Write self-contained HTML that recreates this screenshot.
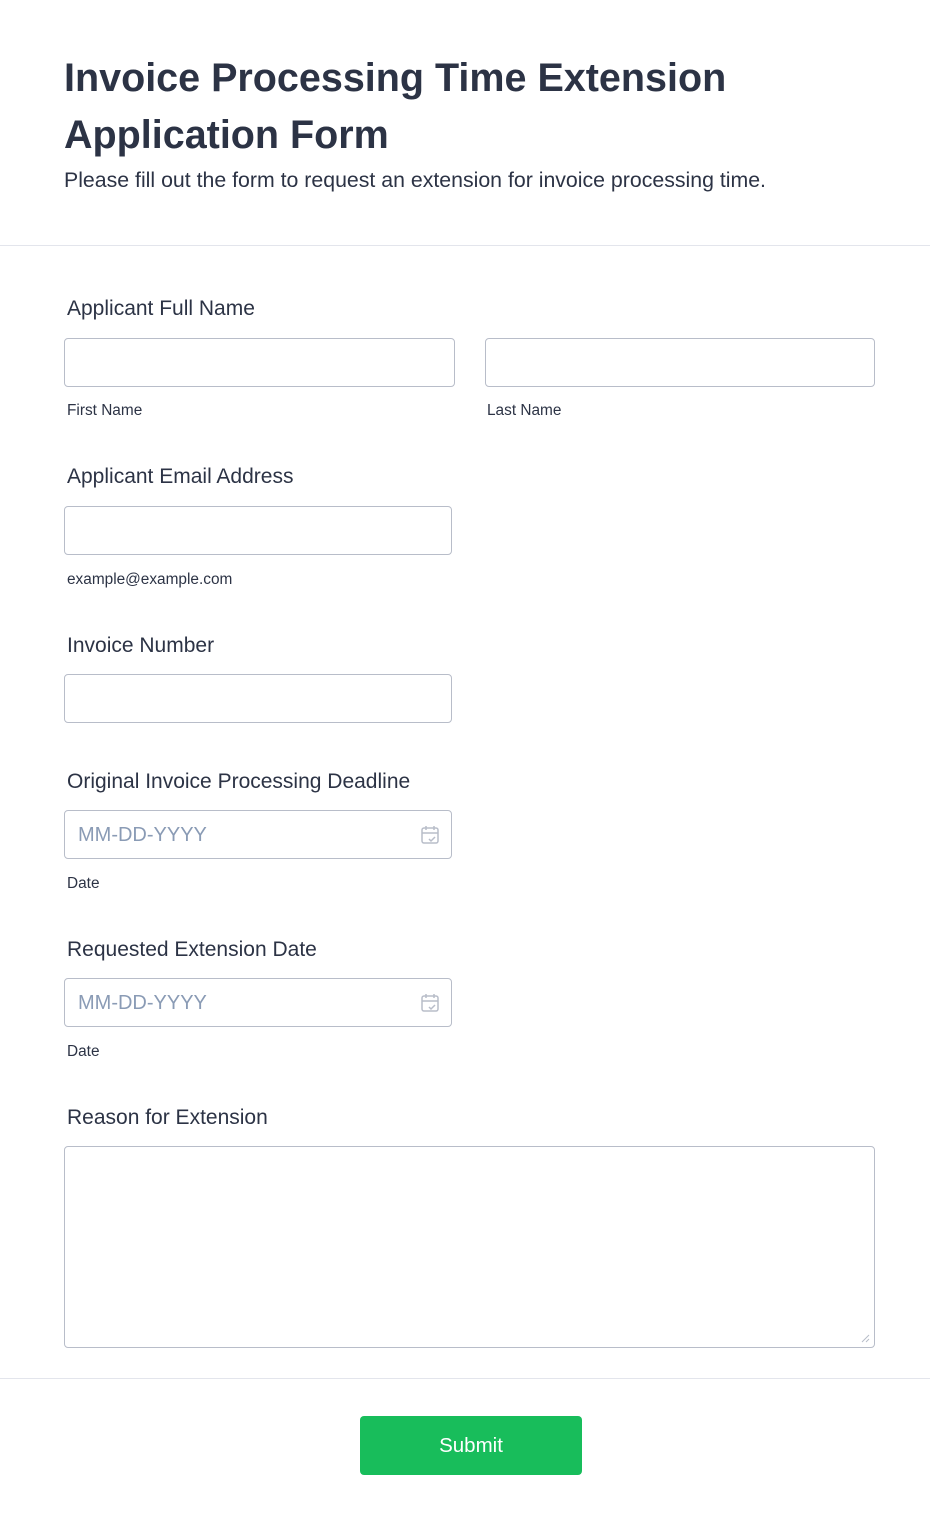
<!DOCTYPE html>
<html><head><meta charset="utf-8"><style>
*{margin:0;padding:0;box-sizing:border-box}
body{width:930px;height:1525px;background:#fff;font-family:"Liberation Sans",Arial,sans-serif;color:#2c3345;position:relative;overflow:hidden}
.a{position:absolute;white-space:nowrap}
h1{position:absolute;left:64px;top:50px;font-size:39.5px;line-height:57px;font-weight:bold;color:#2c3345;letter-spacing:0}
.sub{left:64px;top:168px;font-size:21.3px}
.hr{position:absolute;left:0;width:930px;height:1px;background:#e3e5ec}
.lbl{font-size:21px;left:67px;line-height:24px}
.sl{font-size:15.4px;line-height:18px;color:#2c3345}
.in{position:absolute;border:1px solid #b8bdc9;border-radius:4px;background:#fff}
.ph{position:absolute;left:13px;top:13px;font-size:20px;color:#8a9bb5}
.cal{position:absolute;right:12px;top:14px}
.btn{position:absolute;left:360px;top:1416px;width:222px;height:59px;background:#18bd5b;border-radius:4px;color:#fff;font-size:20.5px;text-align:center;line-height:60px}
</style></head><body>
<h1>Invoice Processing Time Extension<br>Application Form</h1>
<div class="a sub">Please fill out the form to request an extension for invoice processing time.</div>
<div class="hr" style="top:245px"></div>

<div class="a lbl" style="top:297px">Applicant Full Name</div>
<div class="in" style="left:64px;top:338px;width:391px;height:49px"></div>
<div class="in" style="left:485px;top:338px;width:390px;height:49px"></div>
<div class="a sl" style="left:67px;top:402px">First Name</div>
<div class="a sl" style="left:487px;top:402px">Last Name</div>

<div class="a lbl" style="top:465px">Applicant Email Address</div>
<div class="in" style="left:64px;top:506px;width:388px;height:49px"></div>
<div class="a sl" style="left:67px;top:571px">example@example.com</div>

<div class="a lbl" style="top:634px">Invoice Number</div>
<div class="in" style="left:64px;top:674px;width:388px;height:49px"></div>

<div class="a lbl" style="top:770px">Original Invoice Processing Deadline</div>
<div class="in" style="left:64px;top:810px;width:388px;height:49px"><div class="ph">MM-DD-YYYY</div>
<svg class="cal" width="18" height="20" viewBox="0 0 18 20" fill="none" stroke="#b8bdc9" stroke-width="1.5"><rect x="1" y="3" width="16" height="15" rx="2"/><path d="M5 1v4M13 1v4M1 8h16M8 14l2 2 4-4"/></svg></div>
<div class="a sl" style="left:67px;top:875px">Date</div>

<div class="a lbl" style="top:938px">Requested Extension Date</div>
<div class="in" style="left:64px;top:978px;width:388px;height:49px"><div class="ph">MM-DD-YYYY</div>
<svg class="cal" width="18" height="20" viewBox="0 0 18 20" fill="none" stroke="#b8bdc9" stroke-width="1.5"><rect x="1" y="3" width="16" height="15" rx="2"/><path d="M5 1v4M13 1v4M1 8h16M8 14l2 2 4-4"/></svg></div>
<div class="a sl" style="left:67px;top:1043px">Date</div>

<div class="a lbl" style="top:1106px">Reason for Extension</div>
<div class="in" style="left:64px;top:1146px;width:811px;height:202px">
<svg style="position:absolute;right:4px;bottom:4px" width="9" height="9" stroke="#b8bdc9"><path d="M8 1L1 8M8 5L5 8"/></svg></div>

<div class="hr" style="top:1378px"></div>
<div class="btn">Submit</div>
</body></html>
